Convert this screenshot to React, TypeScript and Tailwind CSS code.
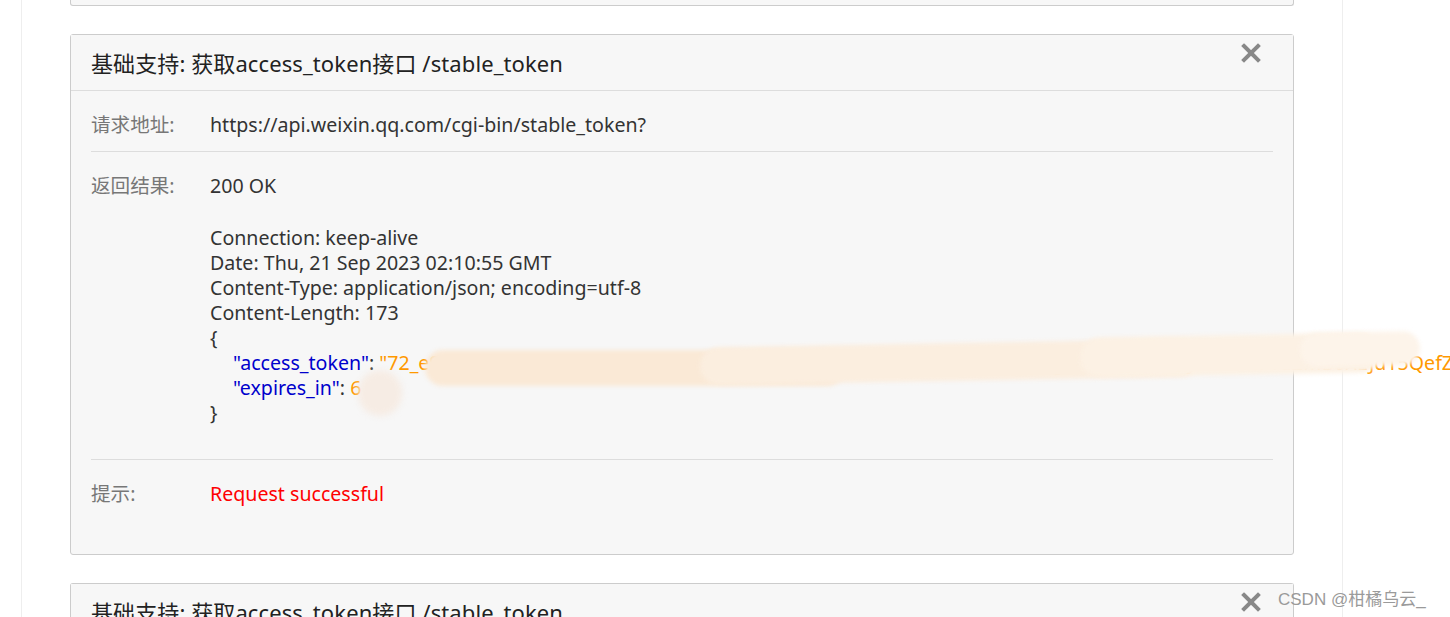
import React from 'react'

const font = { fontFamily: '"Noto Sans", "Noto Sans CJK SC", sans-serif' }

function CloseIcon() {
  return (
    <svg viewBox="0 0 20 20" className="h-5 w-5" aria-hidden="true">
      <line x1="3" y1="3" x2="17" y2="17" stroke="#888" strokeWidth={4} strokeLinecap="square" />
      <line x1="17" y1="3" x2="3" y2="17" stroke="#888" strokeWidth={4} strokeLinecap="square" />
    </svg>
  )
}

function PanelHeader({ title }: { title: string }) {
  return (
    <div className="flex h-[56px] items-start justify-between border-b border-[#ddd] bg-[#f7f7f7] pl-[20px] pr-[32px]">
      <h3 className="pt-[12px] text-[22px] leading-[32px] tracking-[0.1px] text-[#222]">{title}</h3>
      <button className="mt-[8px]" aria-label="close">
        <CloseIcon />
      </button>
    </div>
  )
}

function Row({
  label,
  children,
  className,
}: {
  label: string
  children: React.ReactNode
  className: string
}) {
  return (
    <div className={`flex text-[19.6px] leading-[25px] ${className}`}>
      <div className="w-[119px] shrink-0 text-[#777]">{label}</div>
      <div className="min-w-0 flex-1 text-[#333]">{children}</div>
    </div>
  )
}

export default function App() {
  return (
    <div className="relative h-[617px] w-[1450px] overflow-hidden bg-white" style={font}>
      <div className="ml-[21px] h-full w-[1322px] border-x border-[#eee] px-[48px]">
        {/* tail of the previous panel */}
        <div className="h-[6px] rounded-b-[3px] border-x border-b border-[#ccc] bg-[#f7f7f7]" />

        <div className="mt-[28px] rounded-[3px] border border-[#ccc] bg-[#f7f7f7]">
          <PanelHeader title="基础支持: 获取access_token接口 /stable_token" />
          <div className="px-[20px]">
            <Row label="请求地址:" className="border-b border-[#ddd] pt-[21px] pb-[14px]">
              https://api.weixin.qq.com/cgi-bin/stable_token?
            </Row>
            <Row label="返回结果:" className="border-b border-[#ddd] pt-[21px] pb-[34px]">
              <div>200 OK</div>
              <div className="h-[27px]" />
              <div>Connection: keep-alive</div>
              <div>Date: Thu, 21 Sep 2023 02:10:55 GMT</div>
              <div>Content-Type: application/json; encoding=utf-8</div>
              <div>Content-Length: 173</div>
              <div>{'{'}</div>
              <div className="whitespace-nowrap pl-[23px]">
                <span className="text-[#0000cc]">"access_token"</span>:{' '}
                <span className="text-[#ff9900]">
                  "72_e9kZqA1mPwV7tRbYcN3hLsXo8uGdFj2KiE5nHwQyTz6vUaMbCr4lOpSg0xIqDe9WfLhJkNs3Vt7YuZmB0XEJd15QefZk"
                </span>
              </div>
              <div className="pl-[23px]">
                <span className="text-[#0000cc]">"expires_in"</span>:{' '}
                <span className="text-[#ff9900]">6</span>
              </div>
              <div>{'}'}</div>
            </Row>
            <Row label="提示:" className="pt-[21px] pb-[48px]">
              <span className="text-[#ff0000]">Request successful</span>
            </Row>
          </div>
        </div>

        <div className="mt-[28px] rounded-t-[3px] border-x border-t border-[#ccc] bg-[#f7f7f7]">
          <PanelHeader title="基础支持: 获取access_token接口 /stable_token" />
        </div>
      </div>

      {/* blur smears over the token */}
      <div className="pointer-events-none absolute left-[358px] top-[370px] h-[46px] w-[44px] rounded-full bg-[#f6ece4] blur-[3px]" />
      <div className="pointer-events-none absolute left-[425px] top-[350px] h-[36px] w-[420px] rounded-full bg-[#fae9d6] blur-[2px]" />
      <div className="pointer-events-none absolute left-[700px] top-[343px] h-[38px] w-[500px] -rotate-[1deg] rounded-full bg-[#fbeedf] blur-[2px]" />
      <div className="pointer-events-none absolute left-[1080px] top-[335px] h-[40px] w-[300px] -rotate-[1deg] rounded-full bg-[#fcf1e4] blur-[2px]" />
      <div className="pointer-events-none absolute left-[1300px] top-[332px] h-[34px] w-[120px] -rotate-[1deg] rounded-full bg-[#fdf4ea] blur-[2px]" />

      <div
        className="absolute left-[1278px] top-[588px] text-[17px] leading-[24px] text-[#9a9a9a]"
        style={{ fontFamily: '"Liberation Sans", "Noto Sans CJK SC", sans-serif' }}
      >
        CSDN @柑橘乌云_
      </div>
    </div>
  )
}
